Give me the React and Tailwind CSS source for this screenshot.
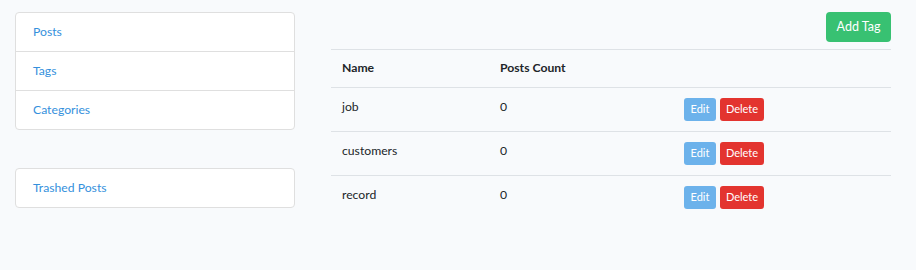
import React from "react";

const rows = ["job", "customers", "record"];

export default function App() {
  return (
    <div className="min-h-[270px] bg-[#f8fafc] font-['Lato','Liberation_Sans',sans-serif] text-[12.2px] text-[#212529]">
      <div className="flex pt-3 pl-[15px]">
        <div className="w-[280px] shrink-0">
          <div className="rounded border border-[#dfdfdf] bg-white">
            {["Posts", "Tags", "Categories"].map((t, i) => (
              <div
                key={t}
                className={`flex h-[38px] items-center pl-[17px] pt-px text-[#3490dc] ${i < 2 ? "border-b border-[#dfdfdf] h-[39px]" : ""}`}
              >
                {t}
              </div>
            ))}
          </div>
          <div className="mt-[38px] rounded border border-[#dfdfdf] bg-white">
            <div className="flex h-[38px] items-center pl-[17px] pt-px text-[#3490dc]">Trashed Posts</div>
          </div>
        </div>
        <div className="ml-[36px] w-[560px]">
          <div className="flex justify-end">
            <button className="h-[30px] w-[65px] rounded bg-[#38c172] text-[12.5px] text-white">Add Tag</button>
          </div>
          <div className="mt-[7px] border-t border-[#dee2e6]">
            <div className="grid h-[38px] grid-cols-[158px_184px_1fr] items-center border-b border-[#dee2e6] font-bold">
              <div className="px-[11px]">Name</div>
              <div className="px-[11px]">Posts Count</div>
              <div></div>
            </div>
            {rows.map((r, i) => (
              <div
                key={r}
                className={`grid h-[44px] grid-cols-[158px_184px_1fr] ${i < rows.length - 1 ? "border-b border-[#dee2e6]" : ""}`}
              >
                <div className="px-[11px] pt-[8px] leading-[21px]">{r}</div>
                <div className="px-[11px] pt-[8px] leading-[21px]">0</div>
                <div className="flex gap-1 px-[11px] pt-[10px]">
                  <button className="h-[23px] w-[32px] rounded-[3px] bg-[#6cb2eb] text-[11px] text-white">Edit</button>
                  <button className="h-[23px] w-[44px] rounded-[3px] bg-[#e3342f] text-[11px] text-white">Delete</button>
                </div>
              </div>
            ))}
          </div>
        </div>
      </div>
    </div>
  );
}
